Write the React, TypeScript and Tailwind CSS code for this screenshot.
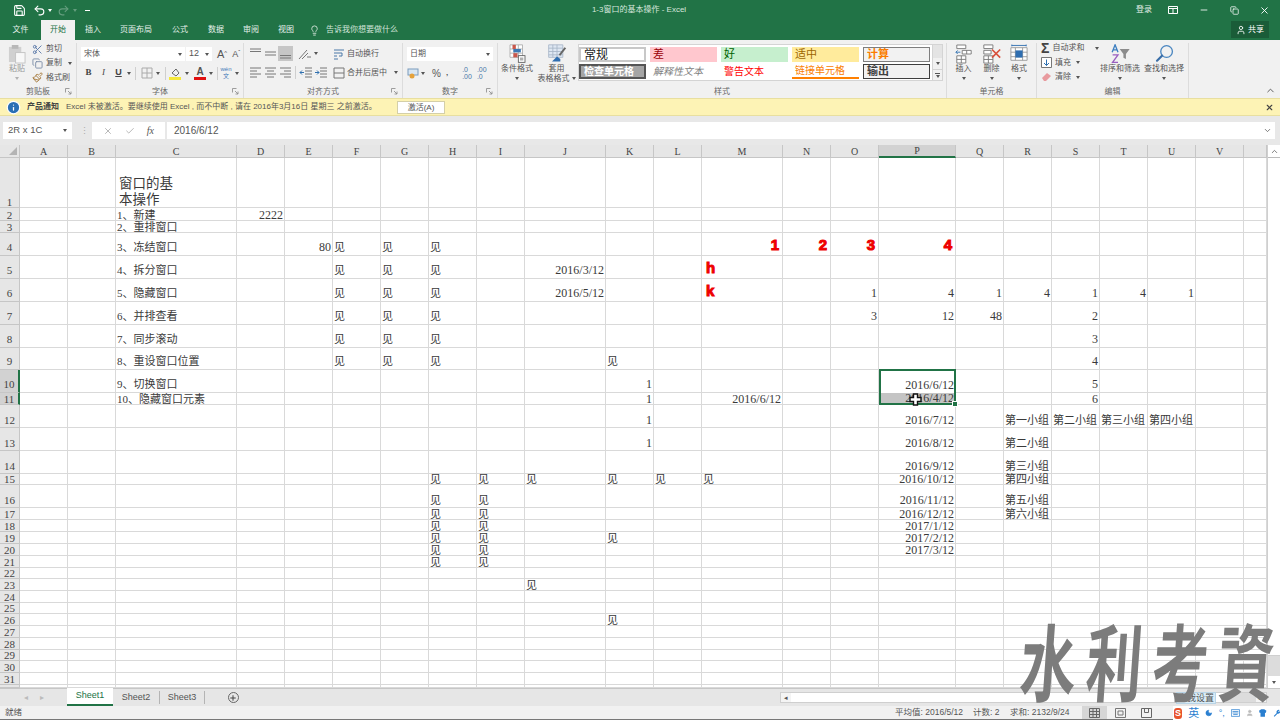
import type { ReactNode } from 'react'
import { Scissors, Copy, Paintbrush, Lightbulb, User, X, Minus, Save, Undo2, Redo2, ChevronUp, ChevronDown, Check, Plus, Info, Moon } from 'lucide-react'

const SANS = "font-['Liberation_Sans','Noto_Sans_CJK_SC',sans-serif]"
const SERIF = "font-['Liberation_Serif','Noto_Sans_CJK_SC',serif]"

const COLS = ['A', 'B', 'C', 'D', 'E', 'F', 'G', 'H', 'I', 'J', 'K', 'L', 'M', 'N', 'O', 'P', 'Q', 'R', 'S', 'T', 'U', 'V', '']
const ROW_HEIGHTS = [50, 13, 12, 23, 23, 23, 23, 23, 22, 23, 12, 23, 23, 23, 11, 23, 12, 12, 12, 12, 12, 11, 12, 12, 11, 12, 12, 12, 11, 12, 12, 3]

const JIAN = '见'
const cells: Record<string, string> = {
  C1: '窗口的基本操作',
  D2: '2222', E4: '80', J5: '2016/3/12', J6: '2016/5/12',
  C2: '1、新建', C3: '2、重排窗口', C4: '3、冻结窗口', C5: '4、拆分窗口', C6: '5、隐藏窗口', C7: '6、并排查看', C8: '7、同步滚动', C9: '8、重设窗口位置', C10: '9、切换窗口', C11: '10、隐藏窗口元素',
  F4: JIAN, G4: JIAN, H4: JIAN, F5: JIAN, G5: JIAN, H5: JIAN, F6: JIAN, G6: JIAN, H6: JIAN, F7: JIAN, G7: JIAN, H7: JIAN, F8: JIAN, G8: JIAN, H8: JIAN, F9: JIAN, G9: JIAN, H9: JIAN, K9: JIAN,
  O6: '1', P6: '4', Q6: '1', R6: '4', S6: '1', T6: '4', U6: '1',
  O7: '3', P7: '12', Q7: '48', S7: '2', S8: '3', S9: '4', S10: '5', S11: '6',
  K10: '1', K11: '1', K12: '1', K13: '1', M11: '2016/6/12',
  P10: '2016/6/12', P11: '2016/4/12', P12: '2016/7/12', P13: '2016/8/12', P14: '2016/9/12', P15: '2016/10/12', P16: '2016/11/12', P17: '2016/12/12', P18: '2017/1/12', P19: '2017/2/12', P20: '2017/3/12',
  R12: '第一小组', S12: '第二小组', T12: '第三小组', U12: '第四小组', R13: '第二小组', R14: '第三小组', R15: '第四小组', R16: '第五小组', R17: '第六小组',
  H15: JIAN, I15: JIAN, J15: JIAN, K15: JIAN, L15: JIAN, M15: JIAN, H16: JIAN, I16: JIAN, H17: JIAN, I17: JIAN, H18: JIAN, I18: JIAN, H19: JIAN, I19: JIAN, K19: JIAN, H20: JIAN, I20: JIAN, H21: JIAN, I21: JIAN, J23: JIAN, K26: JIAN,
}
const redCells: Record<string, string> = { M4: '1', N4: '2', O4: '3', P4: '4', M5: 'h', M6: 'k' }

const Caret = ({ className = '' }: { className?: string }) => (
  <span className={`inline-block w-0 h-0 border-x-[2px] border-x-transparent border-t-[3px] border-t-[#555] ${className}`} />
)

const Launcher = () => (
  <svg width="7" height="7" viewBox="0 0 7 7" className="absolute right-[4px] bottom-[3px]">
    <path d="M0.5 0.5h4M0.5 0.5v4M3 3l3 3M6 3.5V6H3.5" fill="none" stroke="#888" strokeWidth="0.8" />
  </svg>
)

const Group = ({ label, width, launcher, children }: { label: string; width: string; launcher?: boolean; children: ReactNode }) => (
  <div className={`relative flex flex-col h-full border-r border-[#dcdcdc] shrink-0 ${width}`}>
    <div className="flex-1 min-h-0 flex">{children}</div>
    <div className="h-[13px] text-center text-[8px] leading-[13px] text-[#666]">{label}</div>
    {launcher && <Launcher />}
  </div>
)

const SmallIcon = ({ children, active }: { children: ReactNode; active?: boolean }) => (
  <span className={`w-[15px] h-[15px] flex items-center justify-center shrink-0 ${active ? 'bg-[#c6c6c6]' : ''}`}>{children}</span>
)

const Sep = () => <span className="block w-px h-[13px] bg-[#cfcfcf] shrink-0" />

const AlignIcon = ({ kind }: { kind: 'l' | 'c' | 'r' | 'top' | 'mid' | 'bot' }) => {
  const lines: Record<string, string> = {
    l: 'M1 2h11M1 5h7M1 8h11M1 11h7',
    c: 'M1 2h11M3 5h7M1 8h11M3 11h7',
    r: 'M1 2h11M5 5h7M1 8h11M5 11h7',
    top: 'M1 2h11M1 4.5h11',
    mid: 'M1 5h11M1 8h11',
    bot: 'M1 8.5h11M1 11h11',
  }
  return (
    <svg width="13" height="13" viewBox="0 0 13 13">
      <path d={lines[kind]} stroke="#777" strokeWidth="1" fill="none" />
    </svg>
  )
}

const BigButton = ({ icon, lines, width, caretInline }: { icon: ReactNode; lines: string[]; width: string; caretInline?: boolean }) => (
  <div className={`flex flex-col items-center shrink-0 ${width}`}>
    <div className="h-[21px] flex items-center justify-center">{icon}</div>
    {lines.map((l, i) => (
      <div key={l} className="text-[8px] leading-[10px] text-[#555] whitespace-nowrap">
        {l}
        {caretInline && i === lines.length - 1 && <Caret className="ml-[2px] mb-[1px]" />}
      </div>
    ))}
    {!caretInline && <Caret className="mt-[3px]" />}
  </div>
)

const StyleCell = ({ label, className }: { label: string; className: string }) => (
  <div className={`h-[15px] w-[67px] flex items-center pl-[3px] text-[11px] whitespace-nowrap ${className}`}>{label}</div>
)

const Ribbon = () => (
  <div className={`h-[58px] bg-[#f1f1f1] flex pt-[3px] ${SANS}`}>
    <Group label="剪贴板" width="w-[77px]" launcher>
      <div className="w-[32px] flex flex-col items-center pl-[2px]">
        <div className="h-[21px] flex items-center">
          <svg width="18" height="20" viewBox="0 0 19 21">
            <rect x="1" y="3" width="13" height="16" fill="#d0d0d0" />
            <rect x="4" y="1" width="7" height="4" fill="#b8b8b8" />
            <rect x="8" y="9" width="10" height="11" fill="#f8f8f8" stroke="#c4c4c4" />
          </svg>
        </div>
        <div className="text-[8px] leading-[10px] text-[#999]">粘贴</div>
        <Caret className="mt-[3px] opacity-40" />
      </div>
      <div className="flex flex-col -mt-[1px] text-[8px] text-[#555]">
        <div className="h-[14.5px] flex items-center gap-[3px]"><Scissors size={11} color="#5b7aa8" />剪切</div>
        <div className="h-[14.5px] flex items-center gap-[3px]"><Copy size={11} color="#7d8ea8" />复制<Caret className="ml-[3px]" /></div>
        <div className="h-[14.5px] flex items-center gap-[3px]"><Paintbrush size={11} color="#a57a3c" />格式刷</div>
      </div>
    </Group>
    <Group label="字体" width="w-[167px]" launcher>
      <div className="flex flex-col pl-[4px] pt-[4px] gap-[5px]">
        <div className="h-[14px] flex items-center gap-[1px]">
          <div className="w-[104px] h-[14px] bg-white flex items-center justify-between px-[3px] text-[8px] text-[#555]">宋体<Caret /></div>
          <div className="w-[26px] h-[14px] bg-white flex items-center justify-between px-[3px] text-[9px] text-[#555]">12<Caret /></div>
          <span className="ml-[4px] text-[11px] leading-none text-[#555]">A<sup className="text-[6px]">^</sup></span>
          <span className="ml-[4px] text-[9px] leading-none text-[#555]">A<sup className="text-[6px]">ˇ</sup></span>
        </div>
        <div className="h-[14px] flex items-center text-[9px] text-[#444]">
          <SmallIcon><b className="font-['Liberation_Serif',serif]">B</b></SmallIcon>
          <SmallIcon><i className="font-['Liberation_Serif',serif]">I</i></SmallIcon>
          <SmallIcon><u className="font-bold">U</u></SmallIcon>
          <Caret className="ml-[1px]" />
          <span className="ml-[4px]"><Sep /></span>
          <svg width="12" height="12" viewBox="0 0 12 12" className="ml-[5px]"><path d="M1 1h10v10H1zM6 1v10M1 6h10" fill="none" stroke="#aaa" /></svg>
          <Caret className="ml-[3px]" />
          <span className="ml-[5px]"><Sep /></span>
          <svg width="13" height="13" viewBox="0 0 13 13" className="ml-[3px]"><path d="M3 6l4-4 3 4-3 3z" fill="none" stroke="#666" /><rect x="0" y="10" width="12" height="3" fill="#f5e83a" /></svg>
          <Caret className="ml-[3px]" />
          <span className="ml-[5px] w-[12px] h-[13px] text-center text-[10px] leading-[10px] font-bold text-[#555] border-b-[3px] border-[#e01010]">A</span>
          <Caret className="ml-[3px]" />
          <span className="ml-[4px]"><Sep /></span>
          <span className="ml-[2px] w-[12px] text-[6px] leading-[7px] text-center text-[#3f79b8]">wén<br />文</span>
          <Caret className="ml-[3px]" />
        </div>
      </div>
    </Group>
    <Group label="对齐方式" width="w-[159px]" launcher>
      <div className="flex flex-col pl-[4px] pt-[3px] gap-[4px] text-[8px] text-[#555]">
        <div className="flex items-center">
          <SmallIcon><AlignIcon kind="top" /></SmallIcon>
          <SmallIcon><AlignIcon kind="mid" /></SmallIcon>
          <SmallIcon active><AlignIcon kind="bot" /></SmallIcon>
          <svg width="14" height="12" viewBox="0 0 14 12" className="ml-[5px]"><path d="M1 11L9 2M4 11l6-6" stroke="#777" fill="none" /><path d="M9 9h4" stroke="#777" /></svg>
          <Caret className="ml-[2px]" />
          <div className="ml-[15px] flex items-center gap-[2px] whitespace-nowrap">
            <svg width="12" height="12" viewBox="0 0 12 12"><path d="M1 2h10M1 5h8v3H6M1 8h3M1 11h4" stroke="#4a78a8" fill="none" /></svg>
            自动换行
          </div>
        </div>
        <div className="flex items-center">
          <SmallIcon><AlignIcon kind="l" /></SmallIcon>
          <SmallIcon><AlignIcon kind="c" /></SmallIcon>
          <SmallIcon><AlignIcon kind="r" /></SmallIcon>
          <span className="ml-[2px] mr-[2px]"><Sep /></span>
          <SmallIcon><svg width="13" height="11" viewBox="0 0 13 11"><path d="M6 1h7M6 4h7M6 7h7M6 10h7" stroke="#777" /><path d="M1 5.5h4M3 3.5L1 5.5l2 2" stroke="#2f70b0" fill="none" /></svg></SmallIcon>
          <SmallIcon><svg width="13" height="11" viewBox="0 0 13 11"><path d="M6 1h7M6 4h7M6 7h7M6 10h7" stroke="#777" /><path d="M1 5.5h4M3 3.5l2 2-2 2" stroke="#2f70b0" fill="none" /></svg></SmallIcon>
          <div className="ml-[5px] flex items-center gap-[2px] whitespace-nowrap">
            <svg width="12" height="12" viewBox="0 0 12 12"><path d="M1 1h10v10H1zM1 6h3M8 6h3M4 6h4" stroke="#777" fill="none" /></svg>
            合并后居中<Caret className="ml-[5px]" />
          </div>
        </div>
      </div>
    </Group>
    <Group label="数字" width="w-[95px]" launcher>
      <div className="flex flex-col pl-[4px] pt-[4px] gap-[5px] text-[8px] text-[#555]">
        <div className="w-[86px] h-[14px] bg-white flex items-center justify-between px-[3px]">日期<Caret /></div>
        <div className="h-[14px] flex items-center">
          <svg width="12" height="12" viewBox="0 0 12 12"><rect x="1" y="2" width="10" height="6" fill="#d9e6f2" stroke="#7b9cbd" /><circle cx="5" cy="9" r="2.5" fill="#e5a13a" /></svg>
          <Caret className="ml-[2px]" />
          <span className="ml-[7px] text-[10px]">%</span>
          <span className="ml-[5px] font-bold">,</span>
          <span className="ml-[14px] text-[7px] leading-[7px] text-[#4a78a8]">.0<br />.00</span>
          <span className="ml-[5px] text-[7px] leading-[7px] text-[#4a78a8]">.00<br />.0</span>
        </div>
      </div>
    </Group>
    <Group label="样式" width="w-[449px]">
      <BigButton
        width="w-[36px] ml-[1px]"
        lines={['条件格式']}
        icon={
          <svg width="17" height="20" viewBox="0 0 20 24">
            <path d="M1 1h15v15H1zM1 6h15M1 11h15M6 1v15M11 1v15" fill="#fff" stroke="#aaa" />
            <rect x="4" y="1" width="4" height="5" fill="#c9584c" />
            <rect x="5" y="6" width="9" height="4" fill="#3b79b5" />
            <rect x="5" y="11" width="5" height="5" fill="#c9584c" />
            <rect x="11" y="14" width="8" height="8" fill="#fff" stroke="#555" />
            <path d="M13 19h4M13 17h4" stroke="#333" strokeWidth="0.7" />
          </svg>
        }
      />
      <BigButton
        width="w-[43px]"
        caretInline
        lines={['套用', '表格格式']}
        icon={
          <svg width="20" height="20" viewBox="0 0 24 24">
            <path d="M2 1h17v15H2zM2 5h17M2 9h17M2 13h17M7 1v15M12 1v15" fill="#dfe8f3" stroke="#a6b4c6" />
            <path d="M21 4l2 1-7 9-2-1z" fill="#666" />
            <path d="M6 21l6-6 4 3v3z" fill="#2f6eb0" />
          </svg>
        }
      />
      <div className="mt-[1px] h-[37px] w-[355px] bg-white border border-[#d4d4d4] flex flex-col pt-[2px] gap-[2px]">
        <div className="flex gap-[4px]">
          <StyleCell label="常规" className="!text-[12px] bg-white text-[#222] border-2 border-[#c8c8c8]" />
          <StyleCell label="差" className="bg-[#ffc7ce] text-[#9c0006]" />
          <StyleCell label="好" className="bg-[#c6efce] text-[#006100]" />
          <StyleCell label="适中" className="bg-[#ffeb9c] text-[#9c6500]" />
          <StyleCell label="计算" className="font-bold bg-[#f2f2f2] text-[#fa7d00] border border-[#7f7f7f]" />
        </div>
        <div className="flex gap-[4px]">
          <StyleCell label="检查单元格" className="!text-[10px] font-bold bg-[#a5a5a5] text-white border-2 border-[#555]" />
          <StyleCell label="解释性文本" className="italic text-[#7f7f7f] !text-[10px]" />
          <StyleCell label="警告文本" className="text-[#ff0000] !text-[10px]" />
          <StyleCell label="链接单元格" className="text-[#fa7d00] border-b-2 border-[#ff8001] !text-[10px]" />
          <StyleCell label="输出" className="font-bold bg-[#f2f2f2] text-[#3f3f3f] border border-[#3f3f3f]" />
        </div>
      </div>
      <div className="mt-[1px] w-[10px] h-[37px] border border-l-0 border-[#d4d4d4] flex flex-col items-center text-[#777]">
        <span className="h-[13px] w-full bg-[#e4e4e4]" />
        <span className="h-[11px] flex items-center"><Caret /></span>
        <span className="h-[11px] flex flex-col items-center justify-center gap-[1px] border-t border-[#d4d4d4] w-full"><span className="w-[5px] h-px bg-[#555]" /><Caret /></span>
      </div>
    </Group>
    <Group label="单元格" width="w-[90px]">
      <BigButton
        width="w-[29px] ml-[2px]"
        lines={['插入']}
        icon={
          <svg width="18" height="20" viewBox="0 0 20 22">
            <path d="M2 1h10v4H2zM2 13h10v8H2zM2 17h10M7 13v8M8 7h10v4H8zM13 7v4" fill="#fff" stroke="#777" />
            <path d="M1 9h5M3 7L1 9l2 2" stroke="#2f70b0" fill="none" />
          </svg>
        }
      />
      <BigButton
        width="w-[27px]"
        lines={['删除']}
        icon={
          <svg width="20" height="20" viewBox="0 0 22 22">
            <path d="M2 1h10v4H2zM2 13h10v8H2zM2 17h10M7 13v8M2 7h8v4H2z" fill="#fff" stroke="#777" />
            <path d="M11 6l9 9M20 6l-9 9" stroke="#d8503c" strokeWidth="1.8" />
          </svg>
        }
      />
      <BigButton
        width="w-[28px]"
        lines={['格式']}
        icon={
          <svg width="18" height="20" viewBox="0 0 20 22">
            <path d="M1 4h18v14H1zM1 9h18M1 14h18M6 4v14M14 4v14" fill="#fff" stroke="#999" />
            <rect x="6" y="7" width="8" height="8" fill="#2f6eb0" />
            <path d="M2 1.5h16M2 .5v2M18 .5v2" stroke="#2f6eb0" />
          </svg>
        }
      />
    </Group>
    <Group label="编辑" width="w-[152px]">
      <div className="w-[61px] pl-[4px] -mt-[2px] flex flex-col text-[8px] text-[#555] whitespace-nowrap">
        <div className="h-[14.5px] flex items-center gap-[3px]"><span className="text-[14px] font-bold text-[#444] w-[11px]">Σ</span>自动求和<Caret className="ml-[8px]" /></div>
        <div className="h-[14.5px] flex items-center gap-[3px]">
          <svg width="11" height="11" viewBox="0 0 11 11"><path d="M.5.5h10v10H.5z" fill="#fff" stroke="#777" /><path d="M5.5 2.5v6M3 6l2.5 2.5L8 6" stroke="#2f70b0" fill="none" /></svg>
          填充<Caret className="ml-[2px]" />
        </div>
        <div className="h-[14.5px] flex items-center gap-[3px]">
          <svg width="11" height="10" viewBox="0 0 11 10"><path d="M1 6l5-5 4 3-5 5H3z" fill="#e89a9e" /></svg>
          清除<Caret className="ml-[2px]" />
        </div>
      </div>
      <BigButton
        width="w-[44px]"
        lines={['排序和筛选']}
        icon={
          <svg width="19" height="20" viewBox="0 0 22 24">
            <path d="M1 10L4.5 1 8 10M2.4 7h4.2" stroke="#3d7fc0" strokeWidth="1.6" fill="none" />
            <path d="M1.5 13h6.5l-6.5 9h6.5" stroke="#9a5fc0" strokeWidth="1.6" fill="none" />
            <path d="M10 6h12l-4.5 6v6l-3-1.5V12z" fill="#8c8c8c" />
          </svg>
        }
      />
      <BigButton
        width="w-[44px]"
        lines={['查找和选择']}
        icon={
          <svg width="19" height="20" viewBox="0 0 22 24">
            <circle cx="13.5" cy="9" r="7" fill="none" stroke="#4a86c0" strokeWidth="1.6" />
            <path d="M8 14l-6 6" stroke="#3a6ea8" strokeWidth="2.6" strokeLinecap="round" />
          </svg>
        }
      />
    </Group>
    <div className="flex-1 flex items-end justify-end pr-[4px] pb-[2px]">
      <ChevronUp size={11} color="#555" />
    </div>
  </div>
)

const ColumnHeader = ({ label }: { label: string }) => (
  <div className={`flex items-center justify-center border-b border-r border-[#c6c6c6] text-[10px] text-[#444] ${SERIF} ${label === 'P' ? 'bg-[#d2d2d2] !border-b-2 !border-b-[#217346]' : 'bg-[#e6e6e6]'}`}>
    {label}
  </div>
)

// bottom padding of the text, rows are not all the same
const rowPad = (row: number) => {
  if (ROW_HEIGHTS[row - 1] < 15 || row === 1) return 'leading-[9px]'
  return row >= 12 ? 'leading-[12px] pb-[1px]' : 'leading-[12px] pb-[2px]'
}

const Cell = ({ id }: { id: string }) => {
  const value = cells[id]
  const red = redCells[id]
  const isSelected = id === 'P10' || id === 'P11'
  const isNumeric = !!value && /^[\d/]+$/.test(value)
  const row = Number(id.slice(1))
  let tone = 'border-r border-b border-[#d9d9d9]'
  if (id === 'P10') tone = 'border-t-2 border-x-2 border-[#217346] -mt-px'
  if (id === 'P11') tone = 'border-b-2 border-x-2 border-[#217346] bg-[#c4c4c4]'

  if (id === 'C1') {
    return (
      <div className="border-r border-b border-[#d9d9d9] flex items-end pl-[3px] text-[13.5px] leading-[16px] text-[#3a3a3a]">
        <span className="w-[56px] -mb-[1px]">{value}</span>
      </div>
    )
  }

  return (
    <div className={`relative min-w-0 flex items-end whitespace-nowrap text-[#3a3a3a] ${rowPad(row)} ${tone} ${isNumeric ? 'text-[12px] justify-end' : 'text-[11px] pl-[1px]'} ${isNumeric && !isSelected ? 'pr-[1px]' : ''}`}>
      {value}
      {red && (
        <span className={`absolute bottom-[1px] text-[15px] leading-[18px] font-bold text-[#ee0000] [-webkit-text-stroke:1px_#ee0000] ${SANS} ${/\d/.test(red) ? 'right-[3px]' : 'left-[4px]'}`}>{red}</span>
      )}
      {id === 'P11' && (
        <span className="absolute right-[-4px] bottom-[-4px] w-[6px] h-[6px] bg-[#217346] border border-white z-10" />
      )}
    </div>
  )
}

const Sheet = () => (
  <div className="flex-1 min-h-0 flex overflow-hidden">
    <div className={`flex-1 min-w-0 overflow-hidden grid grid-cols-[20px_48px_48px_121px_48px_48px_48px_48px_48px_48px_81px_48px_48px_81px_48px_48px_77px_48px_48px_48px_48px_48px_48px_23px] grid-rows-[13px_50px_13px_12px_23px_23px_23px_23px_23px_22px_23px_12px_23px_23px_23px_11px_23px_12px_12px_12px_12px_12px_11px_12px_12px_11px_12px_12px_12px_11px_12px_12px_3px] ${SERIF}`}>
      <div className="bg-[#e6e6e6] border-r border-b border-[#c6c6c6] flex items-end justify-end p-[2px]">
        <span className="w-0 h-0 border-l-[8px] border-l-transparent border-b-[8px] border-b-[#b4b4b4]" />
      </div>
      {COLS.map((c, i) => <ColumnHeader key={i} label={c} />)}
      {ROW_HEIGHTS.map((_, r) => {
        const row = r + 1
        const selected = row === 10 || row === 11
        return [
          <div key={`h${row}`} className={`flex items-end justify-center border-b border-r border-[#c6c6c6] text-[11px] text-[#444] ${rowPad(row)} ${selected ? 'bg-[#d2d2d2] !border-r-2 !border-r-[#217346]' : 'bg-[#e6e6e6]'}`}>
            {row < 32 ? row : ''}
          </div>,
          ...COLS.map((c, i) => <Cell key={`${i}-${row}`} id={`${c}${row}`} />),
        ]
      })}
    </div>
    <div className="w-[13px] shrink-0 bg-[#f0f0f0] border-l border-[#cfcfcf] flex flex-col items-center">
      <div className="w-full h-[13px] bg-white border-b border-[#bbb] flex items-center justify-center"><ChevronUp size={9} color="#555" /></div>
      <div className="w-full flex-1 bg-white border-b border-[#cfcfcf]" />
      <div className="w-full h-[20px] bg-[#dcdcdc]" />
      <div className="w-full h-[12px] bg-white flex items-center justify-center"><Caret /></div>
    </div>
  </div>
)

const SheetTabs = () => (
  <div className={`h-[18px] shrink-0 bg-[#e6e6e6] border-t border-[#c6c6c6] flex items-stretch text-[9px] text-[#555] ${SANS}`}>
    <div className="w-[67px] flex items-center justify-center gap-[12px] text-[#bbb] text-[8px]"><span>◂</span><span>▸</span></div>
    <div className="w-[46px] bg-white border-b-2 border-[#217346] text-[#217346] flex items-center justify-center -mt-px">Sheet1</div>
    <div className="w-[46px] flex items-center justify-center">Sheet2</div>
    <div className="w-[46px] border-l border-r border-[#b4b4b4] my-[2px] flex items-center justify-center">Sheet3</div>
    <div className="ml-[20px] w-[16px] flex items-center justify-center">
      <span className="w-[11px] h-[11px] rounded-full border border-[#666] flex items-center justify-center"><Plus size={8} color="#444" strokeWidth={3} /></span>
    </div>
    <div className="ml-[539px] flex-1 flex items-center pr-[13px]">
      <div className="flex-1 h-[11px] bg-[#dcdcdc] border border-[#cfcfcf] flex items-stretch text-[#555]">
        <span className="w-[10px] bg-[#f4f4f4] text-[7px] leading-[9px] text-center">◂</span>
        <span className="flex-1 bg-white" />
        <span className="w-[30px]" />
        <span className="w-[10px] bg-[#f4f4f4] text-[7px] leading-[9px] text-center">▸</span>
      </div>
    </div>
  </div>
)

const StatusBar = () => (
  <div className={`h-[14px] shrink-0 bg-[#f1f1f1] border-b border-[#777] flex items-center text-[8.5px] text-[#555] ${SANS}`}>
    <span className="ml-[5px] w-[890px] shrink-0">就绪</span>
    <span className="w-[78px] shrink-0 whitespace-nowrap">平均值: 2016/5/12</span>
    <span className="w-[37px] shrink-0 whitespace-nowrap">计数: 2</span>
    <span className="w-[72px] shrink-0 whitespace-nowrap">求和: 2132/9/24</span>
    <span className="w-[25px] h-[13px] bg-[#d6d6d6] flex items-center justify-center shrink-0">
      <svg width="11" height="10" viewBox="0 0 11 10"><path d="M.5.5h10v9H.5zM.5 3.5h10M.5 6.5h10M4 .5v9M7.5 .5v9" fill="none" stroke="#666" /></svg>
    </span>
    <span className="ml-[8px] shrink-0"><svg width="11" height="10" viewBox="0 0 11 10"><path d="M.5.5h10v9H.5zM3 3h5v4H3z" fill="none" stroke="#777" /></svg></span>
    <span className="ml-[15px] shrink-0"><svg width="11" height="10" viewBox="0 0 11 10"><path d="M.5.5h10v9H.5zM3.500 .5v4h4v-4" fill="none" stroke="#666" /></svg></span>
  </div>
)

const Overlays = () => (
  <>
    <svg width="13" height="13" viewBox="0 0 13 13" className="absolute left-[909px] top-[393px]">
      <path d="M4.5 1h4v3.5H12v4H8.500V12h-4V8.500H1v-4h3.500z" fill="#fff" stroke="#111" strokeWidth="1.4" />
    </svg>
    <div className={`absolute left-[1176px] top-[692px] h-[12px] w-[40px] bg-[#d9ecf7] border border-[#b8d4e6] text-[9px] leading-[10px] text-center whitespace-nowrap text-[#555] ${SANS}`}>点我设置</div>
    <div className="absolute left-[1025px] top-[597px] h-[81px] flex gap-[10px] pointer-events-none font-['Noto_Sans_CJK_TC',sans-serif] font-bold text-[56px] leading-[81px] text-[#7c7c7c] origin-top scale-y-[1.5] -skew-x-6">
      <span>水</span><span>利</span><span>考</span><span>資</span>
    </div>
    <div className={`absolute left-[1173px] top-[706px] w-[107px] h-[14px] bg-white flex items-center gap-[6px] pl-[1px] text-[#2a7fd0] ${SANS}`}>
      <span className="w-[11px] h-[11px] rounded-[3px] bg-[#e8532c] text-white text-[9px] leading-[11px] text-center font-bold">S</span>
      <span className="text-[11px] leading-none">英</span>
      <Moon size={10} fill="#2a7fd0" />
      <span className="text-[9px] leading-none">°,</span>
      <svg width="12" height="10" viewBox="0 0 12 10"><path d="M.5.5h11v9H.5zM2 3h8M2 5h8M3 7h6" fill="none" stroke="#2a7fd0" /></svg>
      <User size={10} color="#bbb" fill="#bbb" />
      <svg width="10" height="10" viewBox="0 0 10 10"><path d="M0 2l3-2h4l3 2-1 3-1-.5V10H2V4.500L1 5z" fill="#2a7fd0" /></svg>
      <svg width="10" height="10" viewBox="0 0 10 10"><path d="M1 9l4-4a3 3 0 014-4L7 3l1 1 1.500-2a3 3 0 01-3.500 4L2 10z" fill="#2a7fd0" /></svg>
    </div>
  </>
)

export default function App() {
  return (
    <div className={`relative w-[1280px] h-[720px] overflow-hidden flex flex-col bg-white ${SANS}`}>
      <div className="h-5 shrink-0 bg-[#217346] flex items-center text-white">
        <Save size={13} className="ml-[13px]" />
        <Undo2 size={13} className="ml-[7px]" />
        <Caret className="ml-[2px] !border-t-white" />
        <Redo2 size={13} className="ml-[5px] opacity-30" />
        <Caret className="ml-[3px] opacity-30 !border-t-white" />
        <span className="ml-[8px] w-[5px] border-t border-white" />
        <div className="flex-1 text-center text-[8px] text-[#d7e7dd] pl-[52px]">1-3窗口的基本操作 - Excel</div>
        <span className="text-[8px] mr-[16px] text-[#e3efe8]">登录</span>
        <svg width="10" height="8" viewBox="0 0 10 8" className="mr-[21px]"><path d="M.5.500h9v7h-9zM.5 2.500h9M5 2.500v5" fill="none" stroke="#fff" /></svg>
        <Minus size={10} className="mr-[21px]" />
        <Copy size={9} className="mr-[20px]" />
        <X size={11} className="mr-[10px]" />
      </div>
      <div className="h-5 shrink-0 bg-[#217346] flex items-end text-[8px] text-[#e5f0ea]">
        <div className="w-[41px] h-full flex items-center justify-center">文件</div>
        <div className="w-[34px] h-full bg-[#f1f1f1] text-[#217346] flex items-center justify-center">开始</div>
        <div className="w-[36px] h-full flex items-center justify-center">插入</div>
        <div className="w-[50px] h-full flex items-center justify-center">页面布局</div>
        <div className="w-[38px] h-full flex items-center justify-center">公式</div>
        <div className="w-[34px] h-full flex items-center justify-center">数据</div>
        <div className="w-[36px] h-full flex items-center justify-center">审阅</div>
        <div className="w-[34px] h-full flex items-center justify-center">视图</div>
        <div className="h-full flex items-center gap-[6px] ml-[6px] text-[#d2e4d9]"><Lightbulb size={11} />告诉我你想要做什么</div>
        <div className="ml-auto mr-[11px] mb-[2px] w-[38px] h-[17px] bg-[#1a5c38] flex items-center justify-center gap-[2px] text-white">
          <User size={10} />共享
        </div>
      </div>
      <Ribbon />
      <div className="h-[18px] shrink-0 bg-[#fdf3b5] border-y border-[#e8dfa0] flex items-center text-[8px] text-[#555]">
        <Info size={15} className="ml-[6px] shrink-0" color="#fff" fill="#2a6fb5" />
        <span className="ml-[6px] w-[39px] shrink-0 font-bold text-[#444]">产品通知</span>
        <span className="w-[331px] shrink-0 whitespace-nowrap">Excel 未被激活。要继续使用 Excel , 而不中断 , 请在 2016年3月16日 星期三 之前激活。</span>
        <span className="w-[48px] h-[13px] bg-white border border-[#d4cfa8] text-center leading-[11px]">激活(A)</span>
        <X size={9} className="ml-auto mr-[6px]" color="#444" strokeWidth={3} />
      </div>
      <div className="h-[29px] shrink-0 bg-[#e8e8e8] flex items-start pt-[6px] text-[#555]">
        <div className="ml-[3px] w-[69px] h-[17px] bg-white flex items-center justify-between px-[5px] text-[9.5px]">2R x 1C<Caret /></div>
        <span className="ml-[8px] w-[3px] mt-[3px] text-[9px] text-[#aaa]">⋮</span>
        <div className="ml-[9px] w-[73px] h-[17px] bg-white flex items-center justify-around px-[5px] text-[#aaa]">
          <X size={10} />
          <Check size={10} />
          <span className={`text-[10px] italic text-[#555] ${SERIF}`}>fx</span>
        </div>
        <div className="ml-[2px] w-[1108px] h-[17px] bg-white flex items-center justify-between pl-[7px] pr-[3px] text-[10px]">
          2016/6/12
          <ChevronDown size={9} />
        </div>
      </div>
      <Sheet />
      <SheetTabs />
      <StatusBar />
      <Overlays />
    </div>
  )
}
